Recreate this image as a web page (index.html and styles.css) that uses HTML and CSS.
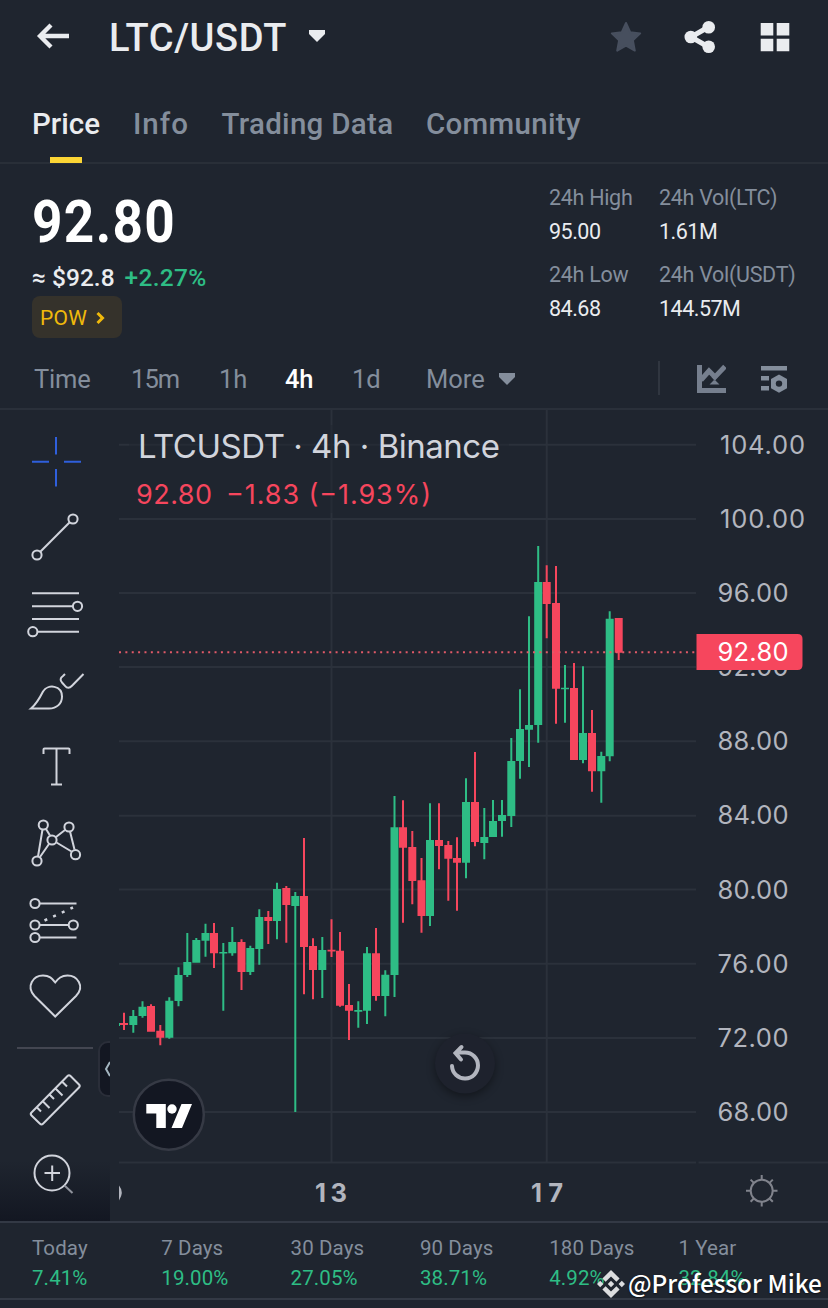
FILE: index.html
```html
<!DOCTYPE html>
<html lang="en">
<head>
<meta charset="utf-8">
<title>LTC/USDT</title>
<link rel="stylesheet" href="styles.css">
</head>
<body>
<div class="app">
  <header class="topbar">
    <svg class="back" width="34" height="28" viewBox="0 0 34 28"><path d="M16 3 5 14l11 11M5.500 14H34" fill="none" stroke="#eaecef" stroke-width="4.300"/></svg>
    <h1 class="pair">LTC/USDT</h1>
    <svg class="caret" width="18" height="14" viewBox="0 0 18 14"><path d="M1 1h16v4L9 13 1 5z" fill="#eaecef"/></svg>
    <div class="actions">
      <svg width="34" height="34" viewBox="0 0 34 34"><path d="M17 3l4.200 9.200 10 1.200-7.300 7 1.900 10.200L17 25.700l-8.800 4.900 1.900-10.200-7.300-7 10-1.200z" fill="#474f5e" stroke="#474f5e" stroke-width="2" stroke-linejoin="round"/></svg>
      <svg width="34" height="34" viewBox="0 0 34 34"><path d="M25.500 7 8 17l17.500 10" fill="none" stroke="#eaecef" stroke-width="5"/><g fill="#eaecef"><circle cx="25.700" cy="7.300" r="6.300"/><circle cx="7.800" cy="17" r="6.300"/><circle cx="25.700" cy="26.700" r="6.300"/></g></svg>
      <svg width="34" height="34" viewBox="0 0 34 34"><path d="M2.700 3h12.600v12.600H2.700zM18.700 3h12.600v12.600H18.700zM2.700 18.700h12.600v12.600H2.700zM18.700 18.700h12.600v12.600H18.700z" fill="#eaecef"/></svg>
    </div>
  </header>

  <nav class="tabs">
    <span class="tab active">Price</span><span class="tab">Info</span><span class="tab">Trading Data</span><span class="tab">Community</span>
  </nav>

  <section class="summary">
    <div class="quote">
      <div class="last">92.80</div>
      <div class="fiat"><span class="usd">≈ $92.8</span><span class="up">+2.27%</span></div>
      <div class="tag">POW<svg width="9" height="14" viewBox="0 0 9 14"><path d="M1.500 2 6.500 7l-5 5" fill="none" stroke="#f0b90b" stroke-width="3"/></svg></div>
    </div>
    <dl class="stats">
      <div><dt>24h High</dt><dd>95.00</dd></div>
      <div><dt>24h Vol(LTC)</dt><dd>1.61M</dd></div>
      <div><dt>24h Low</dt><dd>84.68</dd></div>
      <div><dt>24h Vol(USDT)</dt><dd>144.57M</dd></div>
    </dl>
  </section>

  <nav class="periods">
    <span>Time</span><span>15m</span><span>1h</span><span class="on">4h</span><span>1d</span>
    <span class="more">More<svg width="18" height="14" viewBox="0 0 18 14"><path d="M1 1h16v4L9 13 1 5z" fill="#848e9c"/></svg></span>
    <div class="tools">
      <svg width="30" height="30" viewBox="0 0 30 30"><path d="M3.500 1v25.500H30M5 16l8-9 6 6 10-10.500" fill="none" stroke="#767f8e" stroke-width="5"/><path d="M13.500 20.500h10l-5-5zM15.500 13h6l-3 3.500z" fill="#767f8e"/></svg>
      <svg width="28" height="30" viewBox="0 0 28 30"><path d="M1 2h26v4.500H1zM1 12h8v4.500H1zM1 22h8v4.500H1z" fill="#848e9c"/><path d="M19 10.500l8 4.500v9.200L19 28.700l-8-4.500V15z" fill="#848e9c"/><circle cx="19" cy="19.600" r="3.200" fill="#1f252f"/></svg>
    </div>
  </nav>

  <main class="workspace">
    <aside class="drawing">
      <svg viewBox="16 424 80 76"><path d="M56 437v17.500M56 469v17.500M32 461.700h17M64 461.700h17" stroke="#2f5fdc"/></svg>
      <svg viewBox="16 500 80 76"><circle cx="73" cy="519" r="4.600"/><circle cx="37" cy="555" r="4.600"/><path d="M40.300 551.700 69.700 522.300"/></svg>
      <svg viewBox="16 576 80 76"><path d="M32 593.300h47M32 606.300h41M32 619h47M38 631.700h41"/><circle cx="77.500" cy="606.300" r="4.600"/><circle cx="32.800" cy="631.700" r="4.600"/></svg>
      <svg viewBox="16 652 80 76"><path d="M31 708.500c6-5 9-11 12-17 5-8 19-6 19 5 0 7-5 12-13 12zM65 674l-2 2c-3 2-3 4-1 6.500l3 3.300c2 2.500 4.500 2.500 7 0L83.500 674"/></svg>
      <svg viewBox="16 728 80 76"><path d="M43.500 754v-4.500q0-1 1-1h24q1 0 1 1v4.500M56.500 748.500V784.500M51 784.500h11"/></svg>
      <svg viewBox="16 804 80 76"><path d="M42.500 829.500 38 856.500M46 829l4 6.500M49 844 40 857M56 837l9-7M56.500 842.500l15 9M70 831.500l4.500 18"/><circle cx="43.300" cy="825" r="4.600"/><circle cx="69" cy="827" r="4.600"/><circle cx="52" cy="840" r="4.600"/><circle cx="37" cy="861" r="4.600"/><circle cx="75.500" cy="854.700" r="4.600"/></svg>
      <svg viewBox="16 880 80 76"><path d="M40 903.500h36.500M40 925h28.500M40 937.500h36.500"/><path d="M44.500 920.500 73 907.500" stroke-width="2.500" stroke-dasharray="3 6.500"/><circle cx="35" cy="903.500" r="4.600"/><circle cx="35" cy="925" r="4.600"/><circle cx="73.300" cy="925" r="4.600"/><circle cx="35" cy="937.500" r="4.600"/></svg>
      <svg viewBox="16 956 80 76"><path d="M55.200 1016.500 34.500 996c-9-10-1-20.500 8.500-20.500 7 0 9 3 12.200 7 3.200-4 6-7 12.300-7 9.500 0 18 10.500 8.500 20.500z"/></svg>
      <hr>
      <svg viewBox="16 1064 80 76"><path d="M31.500 1112.500 67.500 1076q1.500-1.500 3 0l8.500 8.500q1.500 1.500 0 3L43 1123.800q-1.500 1.500-3 0l-8.500-8.300q-1.500-1.500 0-3zM36.500 1107l4.500 4.500M42.500 1101l7 7M49.500 1094.500l4.500 4.500M55.500 1088.500l7 7M62.500 1082l4.500 4.500"/></svg>
      <svg viewBox="16 1140 80 76"><circle cx="52" cy="1173" r="17.500"/><path d="M44.500 1173h15.500M52.200 1165.500v15.500"/><path d="M64.500 1185.500l8 7.500" stroke="#8f939c"/></svg>
      <div class="fade"></div>
      <div class="handle"><svg viewBox="0 0 6 16"><path d="M6 1 2 8l4 7"/></svg></div>
    </aside>

    <svg class="chart" width="718" height="811" viewBox="110 410 718 811">
      <path class="grid" d="M119 444.700H696M119 519H696M119 593H696M119 667H696M119 741.300H696M119 815.700H696M119 889.500H696M119 963.700H696M119 1038H696M119 1112H696M119 1162.500H696M698.500 1162.500H828M331.500 410V1162M546.700 410V1162"/>
      <rect x="129" y="425" width="380" height="88" fill="#1f252f" fill-opacity=".5"/>
      <path class="wick up-line" d="M133.300 1010V1032.700M142.500 1001.300V1017.700M169.300 997.300V1038.700M178.500 967.300V1006.300M187.300 933V977M196.300 938V962M205.500 923.700V956.700M223.300 943V1010.700M232.300 927V955.700M250.300 945.700V975M259.300 909.300V964.700M277 882.700V939.300M295.300 892V1112M322.300 937V998M358.300 1001.300V1027.700M367 947V1024M385.300 970.300V1016.300M394.500 796V997M430 803.300V926M466 778.300V878.300M484.300 808V859.300M493 800V837M502 800V836.700M511.300 738V827M520 689.300V778.700M529 616.300V767M538.200 546V742.700M565 665V722.700M583 666.300V763.300M601.300 751.700V802.700M609.700 611.300V761.300"/>
      <path class="wick down-line" d="M124 1012.700V1030M151 1004.300V1031M160.300 1025V1045.300M214 923V968M241.500 939.300V990M268.300 911V944M286.300 886V942.700M304 838V994.300M313 938.300V999.300M331.500 919.300V957M340 932V1006.700M349 984V1040M376 928V1000.700M403 800.300V922.700M412.300 831V904.300M421.500 858V932.700M439 803.300V869.300M448.300 841V900.700M457 837.300V910.700M475 752V846.300M546.700 565.300V638.300M556 566V723.700M574 663V760M592 710V791.700M618.700 618V660"/>
      <path class="body up-line" d="M133.300 1016V1025M142.500 1006.700V1016M169.300 1000.700V1037.700M178.500 975V1001M187.300 962V975M196.300 940V962.700M205.500 933V940.700M223.300 952V953.500M232.300 942V953.300M250.300 948V972M259.300 917V949M277 889V921M295.300 896V906M322.300 950V970M358.300 1010V1011.700M367 953.300V1010.700M385.300 974.700V996M394.500 827.300V975M430 840V916M466 802V862.700M484.300 837V843M493 821V837M502 815V821M511.300 761V816M520 729V761M529 725V729.700M538.200 582V725M565 687.700V689.200M583 733V760M601.300 756V771.300M609.700 618.700V756.300"/>
      <path class="body down-line" d="M124 1023V1025M151 1006V1031.700M160.300 1030.700V1037.700M214 933V953.300M241.500 942V972M268.300 917V921M286.300 888V905M304 896V947M313 946V970M331.500 949.700V951.500M340 950.700V1005.700M349 1005V1010.700M376 953.300V996M403 827.300V847.700M412.300 847V881M421.500 880.300V916M439 840V846M448.300 845V858.700M457 858V862.700M475 802V842M546.700 582V604M556 603V688.700M574 688V760M592 733V771.300M618.700 618V652.700"/>
      <path d="M119 1024.500h1" stroke="#2ebd85" stroke-width="3"/>
      <path d="M119 652.200H696" stroke="#e25a68" stroke-width="2" stroke-dasharray="2 4.370"/>

      <text class="name" x="138" y="458" textLength="362">LTCUSDT · 4h · Binance</text>
      <text class="delta" x="136" y="503.500" textLength="76">92.80</text>
      <text class="delta" x="226" y="503.500" textLength="205">−1.83 (−1.93%)</text>

      <g class="scale">
        <text x="720" y="453.500" textLength="85">104.00</text>
        <text x="720" y="527.500" textLength="85">100.00</text>
        <text x="717.500" y="602" textLength="71">96.00</text>
        <text x="717.500" y="675.500" textLength="71">92.00</text>
        <text x="717.500" y="750" textLength="71">88.00</text>
        <text x="717.500" y="824" textLength="71">84.00</text>
        <text x="717.500" y="898.500" textLength="71">80.00</text>
        <text x="717.500" y="972.500" textLength="71">76.00</text>
        <text x="717.500" y="1046.500" textLength="71">72.00</text>
        <text x="717.500" y="1120.500" textLength="71">68.00</text>
      </g>
      <path d="M696.500 634h101q5 0 5 5v26q0 5-5 5h-101z" fill="#f6465d"/>
      <text class="mark" x="717.500" y="661" textLength="71">92.80</text>
      <path d="M119 1185.500q5.500 6.500 0 15z" fill="#b2b5be"/>
      <g class="dates">
        <text x="315" y="1202" textLength="32">13</text>
        <text x="531" y="1202" textLength="32">17</text>
      </g>
      <g fill="none" stroke="#80838c" stroke-width="2"><circle cx="761.700" cy="1190.700" r="11"/><path d="M761.700 1175v5M761.700 1201.500v5M746 1190.700h5M772.500 1190.700h5M750.600 1179.600l3.500 3.500M769.300 1198.300l3.500 3.500M750.600 1201.800l3.500-3.500M769.300 1183.100l3.500-3.500"/></g>

      <circle cx="168.800" cy="1114.700" r="35" fill="#131722" stroke="#363a45" stroke-width="2.500"/>
      <g fill="#fff"><path d="M146.300 1104h19.500v24h-9.500v-14.500h-10zM181.500 1104H192l-10 24h-10.500z"/><circle cx="172" cy="1109" r="4.700"/></g>
      <circle class="reset" cx="465" cy="1063.500" r="30"/>
      <path d="M452 1066a13 13 0 1 0 13-13.500h-8M461.500 1047l-6 6 5.500 6.500" fill="none" stroke="#b2b5be" stroke-width="4" stroke-linecap="round"/>
    </svg>
  </main>

  <footer class="returns">
    <div><span>Today</span><b>7.41%</b></div>
    <div><span>7 Days</span><b>19.00%</b></div>
    <div><span>30 Days</span><b>27.05%</b></div>
    <div><span>90 Days</span><b>38.71%</b></div>
    <div><span>180 Days</span><b>4.92%</b></div>
    <div><span>1 Year</span><b>32.84%</b></div>
  </footer>

  <div class="watermark">
    <svg width="28" height="28" viewBox="0 0 28 28"><path d="M14 0l8.600 8.600-3.200 3.200L14 6.400l-5.400 5.400-3.200-3.200zM14 28l-8.600-8.600 3.200-3.200 5.400 5.400 5.400-5.400 3.200 3.200zM3.200 10.800 6.400 14l-3.200 3.200L0 14zM24.800 10.800 28 14l-3.200 3.200-3.200-3.200zM14 10.800l3.200 3.200-3.200 3.200-3.200-3.200z" fill="#dcdddf"/></svg>
    <span>@Professor Mike</span>
  </div>
</div>
</body>
</html>
```
FILE: styles.css
```css
* { box-sizing: border-box; }
body { margin: 0; background: #1f252f; font-family: Roboto, "Liberation Sans", sans-serif; color: #eaecef; }
svg { display: block; flex: none; }
.app { position: relative; width: 828px; height: 1308px; overflow: hidden; }

.topbar { display: flex; align-items: center; height: 88px; padding: 0 36px 15px 32px; }
.back { margin: -2px 0 0 3px; }
.pair { margin: 3px 0 0 40px; width: 199px; font-size: 38px; font-weight: 500; line-height: 44px; letter-spacing: .6px; white-space: nowrap; }
.caret { margin-top: -2px; }
.actions { display: flex; gap: 40px; margin-left: auto; }
.actions svg:nth-child(-n+2) { margin-left: -1px; margin-right: 1px; }

.tabs { display: grid; grid-template-columns: 101px 88.500px 204.500px 1fr; height: 76px; padding-left: 32px; border-bottom: 2px solid #292f38; font-size: 29.500px; font-weight: 500; letter-spacing: .3px; color: #848e9c; }
.tab { position: relative; line-height: 73px; white-space: nowrap; }
.tab:nth-child(2) { letter-spacing: 1px; }
.tab.active { color: #eaecef; letter-spacing: 0; }
.tab.active::after { content: ""; position: absolute; left: 18px; bottom: -1px; width: 32px; height: 6px; background: #fcd535; }

.summary { display: flex; justify-content: space-between; height: 182px; padding: 16px 0 0 32px; }
.last { height: 80px; font-size: 59px; font-weight: 700; line-height: 84px; color: #fff; letter-spacing: 1.500px; transform: scaleX(.9); transform-origin: 0 0; }
.fiat { display: flex; gap: 10px; height: 36px; font-size: 24.500px; font-weight: 500; line-height: 36px; }
.up { color: #2ebd85; letter-spacing: .3px; }
.tag { display: flex; align-items: center; gap: 9px; width: 90px; height: 42px; padding: 2px 0 0 8px; border-radius: 8px; background: #35322b; color: #f0b90b; font-size: 21px; letter-spacing: .3px; }
.stats { display: grid; grid-template-columns: 110px 169px; grid-auto-rows: 76.500px; margin: 1px 0 0; font-size: 21.500px; line-height: 34px; letter-spacing: -.3px; }
.stats dt { color: #848e9c; white-space: nowrap; }
.stats dd { margin: 0; letter-spacing: -.5px; }

.periods { display: flex; align-items: center; height: 64px; padding: 4px 0 0 34px; border-bottom: 2px solid #2a303a; font-size: 25.500px; color: #848e9c; letter-spacing: -.2px; }
.periods > span { width: 66px; }
.periods > span:nth-child(1) { width: 97px; }
.periods > span:nth-child(2) { width: 88px; letter-spacing: -.9px; }
.periods > span:nth-child(5) { width: 75px; padding-left: 1px; }
.periods .on { color: #fff; font-weight: 500; }
.periods .more { display: flex; align-items: center; gap: 13px; width: 232px; letter-spacing: 0; }
.tools { display: flex; align-items: center; gap: 34px; height: 34px; padding-left: 36px; border-left: 2px solid #303640; margin-top: -3px; }
.tools svg { margin-top: 2px; }

.workspace { display: flex; height: 811px; }
.drawing { position: relative; width: 110px; height: 811px; padding: 14px 0 0 16px; overflow: hidden; }
.drawing > svg { width: 80px; height: 76px; }
.drawing svg { fill: none; stroke: #d1d4dc; stroke-width: 2; }
.drawing hr { width: 76px; height: 2px; margin: 15px 0 15px 1px; border: 0; background: #434651; }
.fade { position: absolute; left: 0; right: 0; bottom: 0; height: 60px; background: linear-gradient(rgba(19, 23, 34, 0), #131722); z-index: -1; }
.handle { position: absolute; left: 98px; top: 631px; width: 24px; height: 56px; padding: 18px 0 0 4px; border: 2px solid #2a2e39; border-radius: 10px; background: #131722; }
.handle svg { width: 6px; height: 16px; stroke: #a3b5c0; }
.chart { font-family: Inter, "Liberation Sans", sans-serif; }
.grid { stroke: #2b313b; stroke-width: 2; fill: none; }
.wick { stroke-width: 2; }
.body { stroke-width: 8; }
.up-line { stroke: #2ebd85; }
.down-line { stroke: #f6465d; }
.name { font-size: 33px; fill: #d1d4dc; }
.delta { font-size: 27px; fill: #f6465d; }
.scale, .mark { font-size: 25.500px; fill: #b2b5be; }
.mark { fill: #fff; }
.dates { font-size: 25.500px; font-weight: 700; fill: #b2b5be; }
.reset { fill: #1e222d; filter: drop-shadow(0 3px 4px rgba(0, 0, 0, .4)); }

.returns { display: grid; grid-template-columns: repeat(6, 129.300px); height: 79px; padding: 10px 0 0 32px; border-top: 2px solid #333945; border-bottom: 2px solid #333945; font-size: 20.500px; line-height: 30px; letter-spacing: .1px; }
.returns span { display: block; color: #848e9c; }
.returns b { display: block; font-weight: 400; color: #2ebd85; }

.watermark { position: absolute; left: 597px; top: 1264px; display: flex; align-items: center; gap: 3px; height: 40px; font-family: "Noto Sans CJK SC", "Noto Sans", sans-serif; font-size: 24.300px; font-weight: 500; color: #fff; white-space: nowrap; text-shadow: 0 1px 2px rgba(0, 0, 0, .6); }
.watermark span { line-height: 36px; margin-top: -3px; }
```
